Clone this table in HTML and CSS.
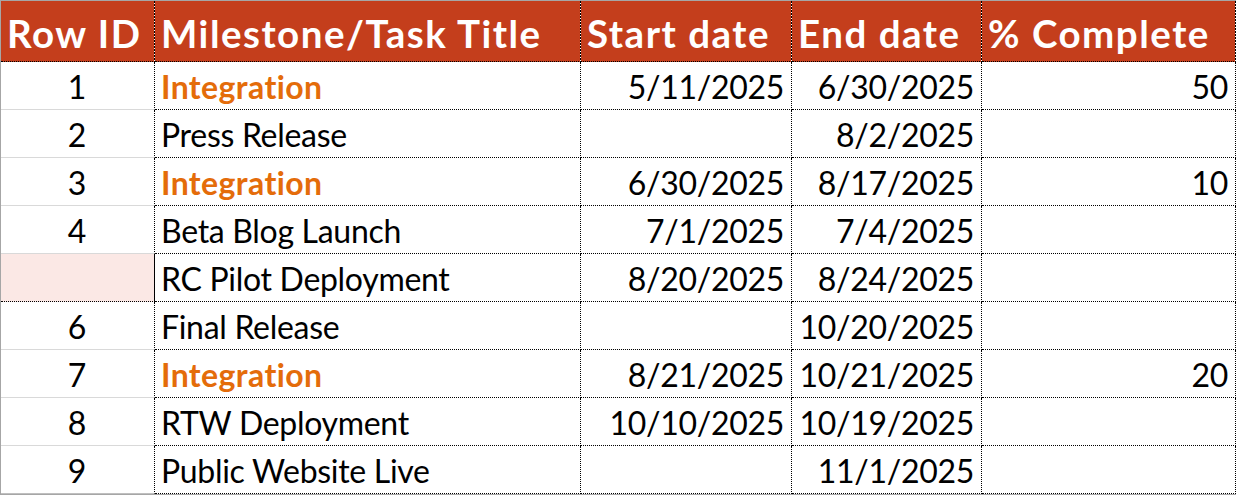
FILE: index.html
```html
<!DOCTYPE html>
<html>
<head>
<meta charset="utf-8">
<link rel="stylesheet" href="styles.css">
</head>
<body>
<div class="sheet">
<table class="grid">
  <colgroup>
    <col class="c-id"><col class="c-title"><col class="c-start"><col class="c-end"><col class="c-pct">
  </colgroup>
  <thead>
    <tr>
      <th>Row ID</th>
      <th>Milestone/Task Title</th>
      <th>Start date</th>
      <th>End date</th>
      <th>% Complete</th>
    </tr>
  </thead>
  <tbody>
    <tr><td class="id">1</td><td class="title hl">Integration</td><td class="num">5/11/2025</td><td class="num">6/30/2025</td><td class="num">50</td></tr>
    <tr><td class="id">2</td><td class="title">Press Release</td><td class="num"></td><td class="num">8/2/2025</td><td class="num"></td></tr>
    <tr><td class="id">3</td><td class="title hl">Integration</td><td class="num">6/30/2025</td><td class="num">8/17/2025</td><td class="num">10</td></tr>
    <tr><td class="id">4</td><td class="title">Beta Blog Launch</td><td class="num">7/1/2025</td><td class="num">7/4/2025</td><td class="num"></td></tr>
    <tr><td class="id sel"></td><td class="title">RC Pilot Deployment</td><td class="num">8/20/2025</td><td class="num">8/24/2025</td><td class="num"></td></tr>
    <tr><td class="id">6</td><td class="title">Final Release</td><td class="num"></td><td class="num">10/20/2025</td><td class="num"></td></tr>
    <tr><td class="id">7</td><td class="title hl">Integration</td><td class="num">8/21/2025</td><td class="num">10/21/2025</td><td class="num">20</td></tr>
    <tr><td class="id">8</td><td class="title">RTW Deployment</td><td class="num">10/10/2025</td><td class="num">10/19/2025</td><td class="num"></td></tr>
    <tr><td class="id">9</td><td class="title">Public Website Live</td><td class="num"></td><td class="num">11/1/2025</td><td class="num"></td></tr>
  </tbody>
</table>
</div>
</body>
</html>
```
FILE: styles.css
```css
html, body {
  margin: 0;
  padding: 0;
  background: #ffffff;
}
.sheet {
  width: 1235px;
  border-left: 1px solid #a6a6a6;
  border-top: 1px solid #a6a6a6;
  border-bottom: 1px solid #a6a6a6;
}
.grid {
  border-collapse: separate;
  border-spacing: 0;
  table-layout: fixed;
  width: 1235px;
  font-family: Lato, "Open Sans", sans-serif;
  font-size: 32px;
  letter-spacing: -0.3px;
  color: #000;
}
.c-id { width: 154px; }
.c-title { width: 426px; }
.c-start { width: 211px; }
.c-end { width: 190px; }
.c-pct { width: 254px; }

th, td {
  padding: 0 7px 0 6px;
  white-space: nowrap;
  overflow: hidden;
  box-sizing: border-box;
}
th {
  height: 61px;
  background:
    repeating-linear-gradient(to bottom, #000 0 2px, #fff 2px 3px) right top / 1px 100% no-repeat,
    #c43e1c;
  color: #fff;
  font-size: 38.5px;
  font-weight: 700;
  letter-spacing: 1.5px;
  text-align: left;
  border-bottom: 1px dotted #000;
  padding-top: 3px;
  padding-right: 4px;
}
td {
  height: 48px;
  border-right: 1px dotted #000;
  border-bottom: 1px dotted #000;
  padding-top: 1px;
}
td.id {
  text-align: center;
  border-bottom: 1px solid #d9d9d9;
}
tbody tr:last-child td.id {
  border-bottom-color: #bfbfbf;
}
td.id.sel {
  background: #fbe8e5;
  border-right: 1px solid #000;
  border-bottom: 1px dotted #000;
}
td.title {
  text-align: left;
}
td.hl {
  color: #e46c0a;
  font-weight: 700;
  letter-spacing: 0.4px;
}
td.num {
  text-align: right;
  padding-right: 7px;
}
```
